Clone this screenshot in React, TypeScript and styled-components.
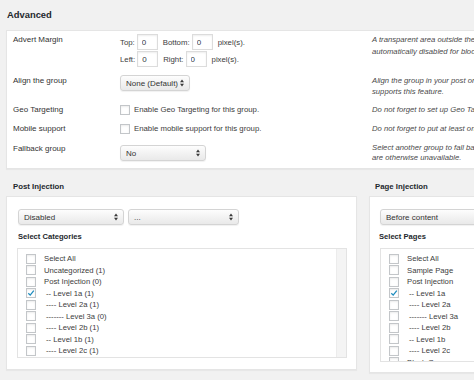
import styled, { createGlobalStyle } from 'styled-components'

const GlobalStyle = createGlobalStyle`
  html, body {
    margin: 0;
    padding: 0;
    background: #f1f1f1;
    overflow: hidden;
  }
  body {
    width: 474px;
    height: 380px;
    font-family: "Liberation Sans", Arial, sans-serif;
    color: #3c3c3c;
  }
`

const CATEGORIES = [
  { label: 'Select All' },
  { label: 'Uncategorized (1)' },
  { label: 'Post Injection (0)' },
  { label: '-- Level 1a (1)', checked: true },
  { label: '---- Level 2a (1)' },
  { label: '------- Level 3a (0)' },
  { label: '---- Level 2b (1)' },
  { label: '-- Level 1b (1)' },
  { label: '---- Level 2c (1)' },
]

const PAGES = [
  { label: 'Select All' },
  { label: 'Sample Page' },
  { label: 'Post Injection' },
  { label: '-- Level 1a', checked: true },
  { label: '---- Level 2a' },
  { label: '------- Level 3a' },
  { label: '---- Level 2b' },
  { label: '-- Level 1b' },
  { label: '---- Level 2c' },
  { label: 'Block Group' },
]

const Arrows = () => (
  <svg width="4" height="8" viewBox="0 0 4 8">
    <path d="M0 3.2 L2 0.6 L4 3.2Z" fill="#3a3a3a" />
    <path d="M0 4.8 L2 7.4 L4 4.8Z" fill="#3a3a3a" />
  </svg>
)

const Check = () => (
  <svg width="8" height="8" viewBox="0 0 8 8">
    <path d="M1.3 4.2 L3.2 6.1 L6.8 1.6" fill="none" stroke="#1e8cbe" strokeWidth="1.3" />
  </svg>
)

const Dropdown = ({ value, width }: { value: string; width: number }) => (
  <SELECT $w={width}>
    <span>{value}</span>
    <Arrows />
  </SELECT>
)

const List = ({ items, height, inset }: { items: { label: string; checked?: boolean }[]; height: number; inset: number }) => (
  <LIST_BOX $h={height} $inset={inset}>
    <LIST_ITEMS>
      {items.map((item) => (
        <LIST_ITEM key={item.label}>
          <CHECKBOX>{item.checked && <Check />}</CHECKBOX>
          <ITEM_TEXT $dashed={item.label.startsWith('-')}>{item.label}</ITEM_TEXT>
        </LIST_ITEM>
      ))}
    </LIST_ITEMS>
    {inset < 0 && <TRACK />}
  </LIST_BOX>
)

const App = () => {
  return (
    <PAGE>
      <GlobalStyle />
      <TITLE>Advanced</TITLE>
      <PANEL>
        <ROW $h={40} $pt={3}>
          <LABEL>Advert Margin</LABEL>
          <FIELD>
            <LINE>
              <span>Top:</span>
              <INPUT readOnly value="0" />
              <span>Bottom:</span>
              <INPUT readOnly value="0" />
              <span>pixel(s).</span>
            </LINE>
            <LINE>
              <span>Left:</span>
              <INPUT readOnly value="0" />
              <span>Right:</span>
              <INPUT readOnly value="0" />
              <span>pixel(s).</span>
            </LINE>
          </FIELD>
          <DESC $lh={12}>
            A transparent area outside the group. Margin is
            <br />
            automatically disabled for block themes.
          </DESC>
        </ROW>
        <ROW $h={29} $pt={4}>
          <LABEL>Align the group</LABEL>
          <FIELD>
            <Dropdown value="None (Default)" width={70} />
          </FIELD>
          <DESC $lh={11}>
            Align the group in your post or page. Only some themes
            <br />
            supports this feature.
          </DESC>
        </ROW>
        <ROW $h={19} $pt={4}>
          <LABEL>Geo Targeting</LABEL>
          <FIELD>
            <CHECK_LINE>
              <CHECKBOX />
              <span>Enable Geo Targeting for this group.</span>
            </CHECK_LINE>
          </FIELD>
          <DESC $lh={11}>Do not forget to set up Geo Targeting in the plugin settings.</DESC>
        </ROW>
        <ROW $h={20} $pt={4}>
          <LABEL>Mobile support</LABEL>
          <FIELD>
            <CHECK_LINE>
              <CHECKBOX />
              <span>Enable mobile support for this group.</span>
            </CHECK_LINE>
          </FIELD>
          <DESC $lh={11}>Do not forget to put at least one mobile ad into this group.</DESC>
        </ROW>
        <ROW $h={28} $pt={4}>
          <LABEL>Fallback group</LABEL>
          <FIELD $pt={2}>
            <Dropdown value="No" width={86} />
          </FIELD>
          <DESC $lh={10}>
            Select another group to fall back to if all ads in this group
            <br />
            are otherwise unavailable.
          </DESC>
        </ROW>
      </PANEL>

      <COLUMNS>
        <INJECTION $w={351}>
          <SUB_TITLE $pl={7}>Post Injection</SUB_TITLE>
          <BOX $pl={11} $pr={9} $pb={11}>
            <SELECTS>
              <Dropdown value="Disabled" width={106} />
              <Dropdown value="..." width={111} />
            </SELECTS>
            <SELECT_TITLE>Select Categories</SELECT_TITLE>
            <List items={CATEGORIES} height={110} inset={-1} />
          </BOX>
        </INJECTION>
        <INJECTION>
          <SUB_TITLE $pl={6}>Page Injection</SUB_TITLE>
          <BOX $pl={10} $pr={10} $pb={10}>
            <SELECTS>
              <Dropdown value="Before content" width={180} />
            </SELECTS>
            <SELECT_TITLE $ml={-1}>Select Pages</SELECT_TITLE>
            <List items={PAGES} height={114} inset={0} />
          </BOX>
        </INJECTION>
      </COLUMNS>
    </PAGE>
  )
}

export default App

const PAGE = styled.div`
  width: 560px;
  padding-left: 6px;
`

const TITLE = styled.h2`
  margin: 0;
  height: 30px;
  line-height: 30px;
  padding-left: 1px;
  font-size: 9.4px;
  font-weight: 700;
  color: #23282d;
`

const PANEL = styled.section`
  background: #fff;
  border: 1px solid #e5e5e5;
  box-shadow: 0 1px 1px rgba(0, 0, 0, 0.04);
  padding-bottom: 1px;
`

const ROW = styled.div<{ $h: number; $pt: number }>`
  display: grid;
  grid-template-columns: 107px 252px 1fr;
  height: ${({ $h }) => $h}px;
  padding: ${({ $pt }) => $pt}px 0 0 6px;
  box-sizing: border-box;
`

const LABEL = styled.div`
  font-size: 8px;
  line-height: 11px;
  color: #333;
`

const FIELD = styled.div<{ $pt?: number }>`
  padding-top: ${({ $pt }) => $pt ?? 0}px;
  font-size: 7.8px;
  color: #3c3c3c;
`

const DESC = styled.p<{ $lh: number }>`
  margin: 0;
  font-size: 7.7px;
  line-height: ${({ $lh }) => $lh}px;
  font-style: italic;
  color: #4a4a4a;
  white-space: nowrap;
`

const LINE = styled.div`
  display: flex;
  align-items: center;
  height: 16px;
  margin-bottom: 1px;

  span {
    margin-right: 2px;
  }
`

const INPUT = styled.input`
  box-sizing: border-box;
  width: 21px;
  height: 16px;
  margin: 0 5px 0 0;
  padding: 0 0 0 4px;
  border: 1px solid #dcdcdc;
  border-radius: 0;
  box-shadow: inset 0 1px 2px rgba(0, 0, 0, 0.07);
  background: #fff;
  font-family: inherit;
  font-size: 8px;
  color: #32373c;
  outline: none;
`

const CHECK_LINE = styled.label`
  display: flex;
  align-items: center;
  gap: 4px;
  height: 11px;
`

const CHECKBOX = styled.span`
  box-sizing: border-box;
  flex: none;
  display: flex;
  align-items: center;
  justify-content: center;
  width: 10px;
  height: 10px;
  border: 1px solid #c3c6c9;
  background: #fff;
  box-shadow: inset 0 1px 2px rgba(0, 0, 0, 0.08);
`

const SELECT = styled.div<{ $w: number }>`
  box-sizing: border-box;
  display: flex;
  align-items: center;
  justify-content: space-between;
  width: ${({ $w }) => $w}px;
  height: 16px;
  padding: 0 5px 0 5px;
  border: 1px solid #d4d4d4;
  border-radius: 3px;
  background: linear-gradient(#fdfdfd, #e9e9e9);
  box-shadow: 0 1px 1px rgba(0, 0, 0, 0.06);
  font-size: 8px;
  color: #333;
`

const COLUMNS = styled.div`
  display: flex;
  align-items: flex-start;
  gap: 12px;
`

const INJECTION = styled.section<{ $w?: number }>`
  ${({ $w }) => ($w ? `width: ${$w}px; flex: none;` : 'flex: 1;')}
`

const SUB_TITLE = styled.h3<{ $pl: number }>`
  margin: 0;
  padding: 12px 0 4px ${({ $pl }) => $pl}px;
  font-size: 7.8px;
  line-height: 11px;
  font-weight: 700;
  color: #23282d;
`

const BOX = styled.div<{ $pl: number; $pr: number; $pb: number }>`
  background: #fff;
  border: 1px solid #e5e5e5;
  box-shadow: 0 1px 1px rgba(0, 0, 0, 0.04);
  padding: 12px ${({ $pr }) => $pr}px ${({ $pb }) => $pb}px ${({ $pl }) => $pl}px;
`

const SELECTS = styled.div`
  display: flex;
  gap: 4px;
`

const SELECT_TITLE = styled.h4<{ $ml?: number }>`
  margin: 6px 0 0 ${({ $ml }) => $ml ?? 0}px;
  font-size: 7.6px;
  line-height: 11px;
  font-weight: 700;
  color: #23282d;
`

const LIST_BOX = styled.div<{ $h: number; $inset: number }>`
  box-sizing: border-box;
  display: flex;
  height: ${({ $h }) => $h}px;
  margin: 6px 0 0 ${({ $inset }) => $inset}px;
  border: 1px solid #e3e3e3;
  background: #fff;
  overflow: hidden;
`

const LIST_ITEMS = styled.ul`
  flex: 1;
  margin: 0;
  padding: 4px 0 0 8px;
  list-style: none;
`

const LIST_ITEM = styled.li`
  display: flex;
  align-items: center;
  gap: 8px;
  height: 11.5px;
`

const ITEM_TEXT = styled.span<{ $dashed: boolean }>`
  padding-left: ${({ $dashed }) => ($dashed ? 2 : 0)}px;
  font-size: 7.7px;
  color: #3c3c3c;
  white-space: nowrap;
`

const TRACK = styled.div`
  flex: none;
  width: 9px;
  background: #f4f4f4;
  border-left: 1px solid #ececec;
`
